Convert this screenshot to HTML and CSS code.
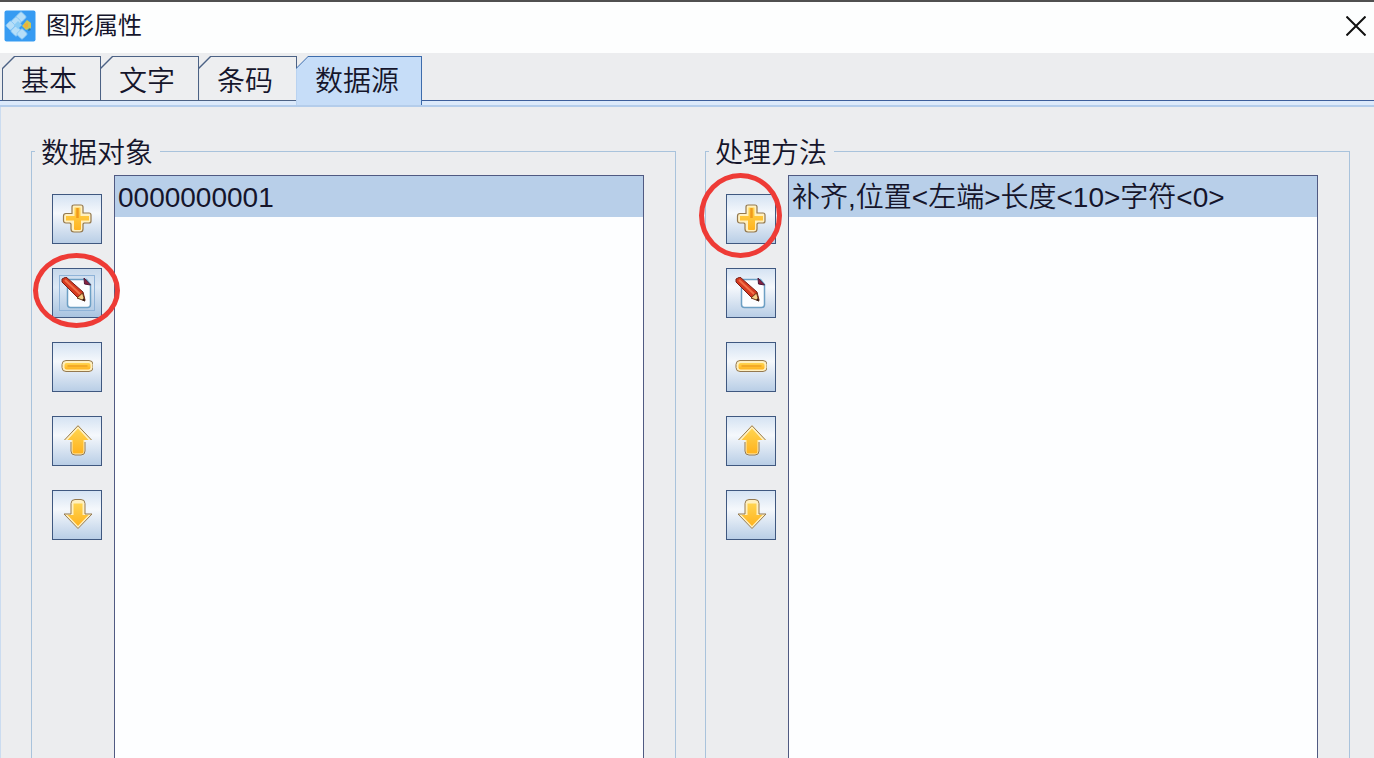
FILE: index.html
```
<!DOCTYPE html>
<html lang="zh-CN">
<head>
  <meta charset="UTF-8" />
  <meta name="viewport" content="width=device-width, initial-scale=1" />
  <title>图形属性</title>
  <link rel="stylesheet" href="styles.css">
</head>
<body>
  <!-- shared icons -->
  <svg class="defs" width="0" height="0" aria-hidden="true">
    <defs>
      <linearGradient id="gold" x1="0" y1="0" x2="0" y2="1">
        <stop offset="0" stop-color="#ffd44f" />
        <stop offset="1" stop-color="#ffb31f" />
      </linearGradient>
    </defs>
    <symbol id="i-plus" viewBox="0 0 32 32">
      <path d="M13 2h7q2 0 2 2v6h6q2 0 2 2v6q0 2-2 2h-5l-1 1v5q0 3-3 3h-6q-3 0-3-3v-5l-1-1H5q-2.500 0-2.500-2.500V13q0-2.500 2.500-2.500h6V4q0-2 2-2z" fill="#fff0c0" stroke="#94794f" stroke-width="1.200" />
      <path d="M13.500 4.500h6V13H28v4.500h-8V26q0 1-1 1h-5q-1 0-1-1v-8.500H5V13h8.500z" fill="url(#gold)" />
      <path d="M16.500 5v10" stroke="#f09a1c" stroke-width="2.500" />
    </symbol>
    <symbol id="i-edit" viewBox="0 0 32 32">
      <path d="M6.500 2.500h19l4 5v20q0 3-3 3h-17q-3 0-3-3z" fill="#fbfdff" stroke="#6c9fc4" stroke-width="1.500" />
      <path d="M23 1l6.500 7-6-1z" fill="#8a2140" stroke="#4d1a3a" stroke-width="1" />
      <path d="M1 2l4-2 17 15 2 8-8-3L1 5z" fill="#d63a1f" stroke="#762018" stroke-width="1" />
      <path d="M4 3l15 14" stroke="#f2714a" stroke-width="2" />
      <path d="M16 21l5.500-5 2.500 8z" fill="#f5cf85" stroke="#6b3415" stroke-width="1" />
      <path d="M21 23l2-2 1 3.500z" fill="#2c1818" />
    </symbol>
    <symbol id="i-minus" viewBox="0 0 32 32">
      <rect x="1" y="9.500" width="31" height="11" rx="4" fill="#fff0c0" stroke="#94794f" />
      <rect x="3.500" y="12" width="26" height="6.500" rx="2" fill="url(#gold)" />
      <path d="M6.500 15h20" stroke="#efa122" stroke-width="1.500" />
    </symbol>
    <symbol id="i-up" viewBox="0 0 32 32">
      <path d="M17 0l14 15h-7v11q0 4-4 4h-6q-4 0-4-4V15H3z" fill="#fff0c0" />
      <path d="M17 3.500l10.500 11.500h-5V27q0 1.500-1.500 1.500h-8q-1.500 0-1.500-1.500V15h-5z" fill="url(#gold)" />
      <path d="M3.500 15L17 0.700 30.500 15M10 17v9q0 4 4 4h6q4 0 4-4v-9" fill="none" stroke="#94794f" />
    </symbol>
    <symbol id="i-down" viewBox="0 0 32 32">
      <path d="M17 29.500L3 15h7V4.500q0-4 4-4h6q4 0 4 4V15h7z" fill="#fff0c0" stroke="#94794f" />
      <path d="M17 27L6.500 16h6V4.500h9V16h6z" fill="url(#gold)" />
    </symbol>
  </svg>

  <div class="dialog">
    <header class="titlebar">
      <svg class="logo" viewBox="0 0 32 32" aria-hidden="true">
        <rect x="0.500" y="0.500" width="31" height="31" rx="2" fill="#369bf2" />
        <g fill="#b5def8" stroke="#7fc3f4" stroke-width="0.800">
          <rect x="13" y="3" width="8" height="8" rx="1.500" transform="rotate(45 17 7)" />
          <rect x="8" y="8" width="8" height="8" rx="1.500" transform="rotate(45 12 12)" />
          <rect x="3" y="12" width="7" height="7" rx="1.500" transform="rotate(45 6.500 15.500)" />
          <rect x="8" y="17" width="8" height="8" rx="1.500" transform="rotate(45 12 21)" />
          <rect x="14" y="20" width="8" height="8" rx="1.500" transform="rotate(45 18 24)" />
        </g>
        <path d="M14 11l4 4-4 4-4-4z" fill="#8accf5" />
        <path d="M23 10l4 3v5l-5 2-4-4z" fill="#d0c650" />
        <path d="M20 14l4-1v4l-3 1z" fill="#f3ae36" />
        <path d="M25 18l2 2-3 1z" fill="#397b88" />
      </svg>
      <h1>图形属性</h1>
      <button class="close" type="button" aria-label="关闭">
        <svg viewBox="0 0 20 20"><path d="M0.500 0.500l19 19M19.500 0.500l-19 19" stroke="#111" stroke-width="2" /></svg>
      </button>
    </header>

    <nav class="tabs" role="tablist">
      <button class="tab" type="button" role="tab"><span>基本</span></button>
      <button class="tab" type="button" role="tab"><span>文字</span></button>
      <button class="tab" type="button" role="tab"><span>条码</span></button>
      <button class="tab active" type="button" role="tab" aria-selected="true"><span>数据源</span></button>
    </nav>

    <main class="panel">
      <fieldset class="group">
        <legend>数据对象</legend>
        <div class="tools">
          <button class="tool" type="button" aria-label="添加"><svg><use href="#i-plus" /></svg></button>
          <div class="marked">
            <button class="tool focused" type="button" aria-label="编辑"><svg><use href="#i-edit" /></svg></button>
            <span class="ring ring-wide"></span>
          </div>
          <button class="tool" type="button" aria-label="删除"><svg><use href="#i-minus" /></svg></button>
          <button class="tool" type="button" aria-label="上移"><svg><use href="#i-up" /></svg></button>
          <button class="tool" type="button" aria-label="下移"><svg><use href="#i-down" /></svg></button>
        </div>
        <ul class="list" role="listbox" aria-label="数据对象">
          <li role="option" aria-selected="true">0000000001</li>
        </ul>
      </fieldset>

      <fieldset class="group">
        <legend>处理方法</legend>
        <div class="tools">
          <div class="marked">
            <button class="tool" type="button" aria-label="添加"><svg><use href="#i-plus" /></svg></button>
            <span class="ring ring-tall"></span>
          </div>
          <button class="tool" type="button" aria-label="编辑"><svg><use href="#i-edit" /></svg></button>
          <button class="tool" type="button" aria-label="删除"><svg><use href="#i-minus" /></svg></button>
          <button class="tool" type="button" aria-label="上移"><svg><use href="#i-up" /></svg></button>
          <button class="tool" type="button" aria-label="下移"><svg><use href="#i-down" /></svg></button>
        </div>
        <ul class="list" role="listbox" aria-label="处理方法">
          <li role="option" aria-selected="true">补齐,位置&lt;左端&gt;长度&lt;10&gt;字符&lt;0&gt;</li>
        </ul>
      </fieldset>
    </main>
  </div>
</body>
</html>
```
FILE: styles.css
```
* { box-sizing: border-box; margin: 0; padding: 0; }
body { font-family: "Liberation Sans", "Noto Sans CJK SC", sans-serif; font-size: 28px; font-weight: 350; color: #15152b; background: #ecedef; }
button { font: inherit; color: inherit; border: 0; background: none; }
.defs { position: absolute; }
.dialog { display: flex; flex-direction: column; height: 100vh; }

/* title bar */
.titlebar { display: flex; align-items: center; height: 53px; padding: 0 8px 4px 4px; border-top: 2px solid #505050; background: #fdfefe; }
.logo { width: 32px; height: 32px; }
.titlebar h1 { flex: 1; margin-left: 10px; font-size: 24px; line-height: 32px; font-weight: 400; }
.close { width: 20px; height: 20px; }
.close svg { display: block; width: 20px; height: 20px; }

/* tabs */
.tabs { display: flex; height: 54px; padding: 3px 0 0 2px; border-bottom: 2px solid #b4cdeb; background: linear-gradient(#ecedef 47px, #3d5f9c 47px, #3d5f9c 48px, #dceafb 48px); }
.tab { position: relative; height: 45px; margin-right: -1px; padding: 0 24px 0 19px; line-height: 52px; background: #4c6285; clip-path: polygon(0 12px, 12px 0, 100% 0, 100% 100%, 0 100%); }
.tab::before { content: ""; position: absolute; inset: 1px; background: #edeef0; clip-path: polygon(0 12px, 12px 0, 100% 0, 100% 100%, 0 100%); }
.tab span { position: relative; }
.tab.active { height: 49px; padding: 0 23px 4px 19px; background: #3d6cac; }
.tab.active::before { inset: 1px 1px 0 0; background: #c6ddf8; }

/* panel */
.panel { flex: 1; display: flex; gap: 29px; padding: 25px 24px 0 30px; min-height: 0; border-left: 1px solid #cbdcf0; }
.group { flex: 1; display: flex; gap: 12px; min-width: 0; padding: 5px 31px 0 20px; border: 1px solid #a9c3dc; border-bottom: 0; }
.group legend { margin-left: -17px; padding: 6px 7px 0 6px; line-height: 32px; }
.tools { display: flex; flex-direction: column; gap: 24px; padding-top: 19px; }
.tool { display: flex; align-items: center; justify-content: center; width: 50px; height: 50px; border: 1px solid #3f5880; background: linear-gradient(#d5e3f3, #f5f8fc 38%, #b9cee6); }
.tool svg { width: 32px; height: 32px; }
.tool.focused { background: linear-gradient(#c6d8eb, #dce8f5 38%, #a9c4e0); outline: 1px solid #8fb3d8; outline-offset: -8px; }
.marked { position: relative; }
.ring { position: absolute; border: 5px solid #ee3b36; border-radius: 50%; pointer-events: none; }
.ring-wide { left: -19px; top: -15px; width: 87px; height: 75px; }
.ring-tall { left: -27px; top: -21px; width: 83px; height: 85px; }
.list { flex: 1; min-width: 0; list-style: none; border: 1px solid #505a82; border-bottom: 0; background: #fdfeff; }
.list li { height: 41px; padding-left: 3px; line-height: 44px; white-space: nowrap; background: #b8cfe9; }
```
